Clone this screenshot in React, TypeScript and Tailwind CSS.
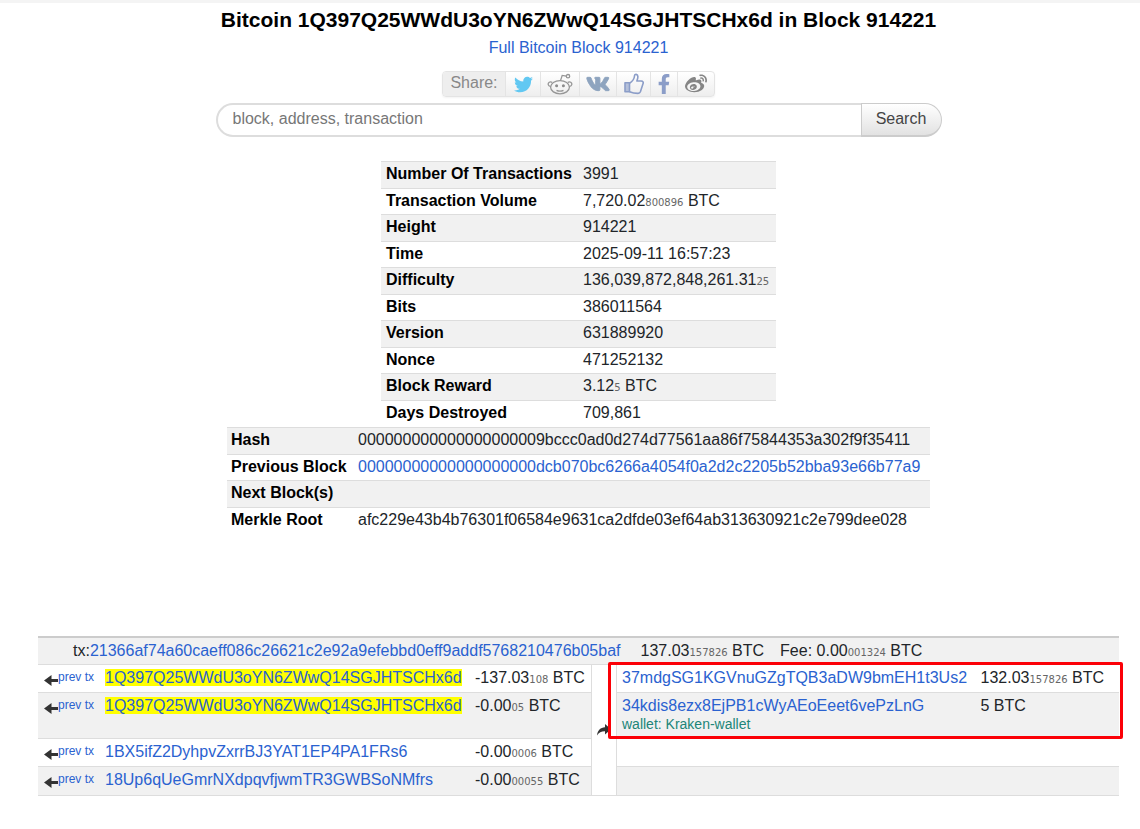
import React from "react";
import { FaTwitter, FaVk, FaFacebookF, FaWeibo } from "react-icons/fa";

const linkClass = "text-[#2a62d0] hover:underline";

function Amount({ main, rest = "", unit = "" }: { main: string; rest?: string; unit?: string }) {
  return (
    <span className="whitespace-nowrap">
      {main}
      <small className="font-['DejaVu_Sans',sans-serif] text-[10px] leading-none text-[#666]">{rest}</small>
      {unit && ` ${unit}`}
    </span>
  );
}

function RedditIcon() {
  return (
    <svg viewBox="0 0 26 22" className="h-[22px] w-[26px]" fill="none" stroke="#969696" strokeWidth="1.3" aria-hidden="true">
      <ellipse cx="13" cy="14.2" rx="9.4" ry="6.600" />
      <path d="M5.2 9.4C3 8 .8 9.800 1.2 11.600c.2 1 1.200 1.700 2.600 1.900M20.800 9.400c2.200-1.400 4.400.4 4 2.200-.2 1-1.200 1.700-2.600 1.900" />
      <path d="M13.500 7.600 15.200 2.400 19.400 3.200" />
      <circle cx="21" cy="3.200" r="1.700" />
      <circle cx="9.600" cy="12.800" r="1.500" fill="#8c8c8c" stroke="none" />
      <circle cx="16.400" cy="12.800" r="1.500" fill="#8c8c8c" stroke="none" />
      <path d="M9.500 17.400c2 .9 5 .9 7 0" />
    </svg>
  );
}

function LikeIcon() {
  return (
    <svg viewBox="0 0 20 22" className="h-[22px] w-5" fill="none" stroke="#8b9dc8" strokeWidth="1.6" strokeLinejoin="round" aria-hidden="true">
      <path d="M5.500 10.200c3-1.700 4.700-4 5-7.200.1-2.400 3.300-2.200 3.400.6 0 1.800-.5 3-1 4.400h4.300c1.800 0 2.400 1.300 1.800 2.700l-2.600 8.100c-.4 1.100-1.200 1.600-2.400 1.600-3.400 0-5-.2-8.500-1.700" />
      <path d="M1 9.800h4.500v9H1z" fill="#8b9dc8" fillOpacity=".6" />
    </svg>
  );
}

function LeftArrow() {
  return (
    <svg viewBox="0 0 14 11" className="mt-1.5 h-[11px] w-[14px] shrink-0" fill="#333" aria-hidden="true">
      <path d="M0 5.500 7.500 0v3.900H14v3.200H7.500V11z" />
    </svg>
  );
}

function ForwardArrow() {
  return (
    <svg viewBox="0 0 14 12" className="h-3 w-[14px]" fill="#333" aria-hidden="true">
      <path d="M0 11.500C.6 6.200 3.500 3.400 8 3.200V0l6 5.300-6 5.300V7.300C4.500 7.200 2 8.500 0 11.500z" />
    </svg>
  );
}

const shares = [
  { name: "Twitter", width: "w-[35px]", icon: <FaTwitter size={19} color="#62c8f2" /> },
  { name: "Reddit", width: "w-[39px]", icon: <RedditIcon /> },
  { name: "VK", width: "w-[37px]", icon: <FaVk size={24} color="#8ea4bf" stroke="#8ea4bf" strokeWidth={24} /> },
  { name: "Like", width: "w-[34px]", icon: <LikeIcon /> },
  { name: "Facebook", width: "w-[27px]", icon: <FaFacebookF size={20} color="#8b9dc8" /> },
  { name: "Weibo", width: "w-[37px]", icon: <FaWeibo size={22} color="#858585" /> },
];

const summary: [string, string, string?, string?][] = [
  ["Number Of Transactions", "3991"],
  ["Transaction Volume", "7,720.02", "800896", "BTC"],
  ["Height", "914221"],
  ["Time", "2025-09-11 16:57:23"],
  ["Difficulty", "136,039,872,848,261.31", "25"],
  ["Bits", "386011564"],
  ["Version", "631889920"],
  ["Nonce", "471252132"],
  ["Block Reward", "3.12", "5", "BTC"],
  ["Days Destroyed", "709,861"],
];

const hashes = [
  { label: "Hash", value: "000000000000000000009bccc0ad0d274d77561aa86f75844353a302f9f35411" },
  { label: "Previous Block", value: "00000000000000000000dcb070bc6266a4054f0a2d2c2205b52bba93e66b77a9", link: true },
  { label: "Next Block(s)", value: "" },
  { label: "Merkle Root", value: "afc229e43b4b76301f06584e9631ca2dfde03ef64ab313630921c2e799dee028" },
];

const inputs = [
  { address: "1Q397Q25WWdU3oYN6ZWwQ14SGJHTSCHx6d", main: "-137.03", rest: "108", marked: true, height: "h-7" },
  { address: "1Q397Q25WWdU3oYN6ZWwQ14SGJHTSCHx6d", main: "-0.00", rest: "05", marked: true, height: "h-[46px]" },
  { address: "1BX5ifZ2DyhpvZxrrBJ3YAT1EP4PA1FRs6", main: "-0.00", rest: "0006", marked: false, height: "h-7" },
  { address: "18Up6qUeGmrNXdpqvfjwmTR3GWBSoNMfrs", main: "-0.00", rest: "00055", marked: false, height: "h-7" },
];

const stripedRow = "h-[26px] border-t border-[#ddd] align-top leading-6 odd:h-[27px] odd:bg-[#f1f1f1]";
const txRow = "border-t border-[#ddd] align-top leading-[25px] even:bg-[#f1f1f1]";

export default function App() {
  return (
    <div className="border-t-[3px] border-[#f4f4f4] bg-white pb-9 font-['Liberation_Sans',Arial,sans-serif] text-base leading-6 text-[#212529]">
      <header className="flex flex-col items-center pl-[17px]">
        <h1 className="pt-1 text-[21px] leading-[26px] font-bold text-black">
          Bitcoin 1Q397Q25WWdU3oYN6ZWwQ14SGJHTSCHx6d in Block 914221
        </h1>
        <a href="#block" className={`${linkClass} mt-[3px]`}>Full Bitcoin Block 914221</a>
        <div className="mt-[11px] flex h-[26px] overflow-hidden rounded border border-[#e4e4e4] bg-linear-to-b from-white to-[#eee] shadow-xs">
          <span className="flex w-[62px] items-center justify-center bg-[#eee] pb-0.5 text-[#888]">Share:</span>
          {shares.map((s) => (
            <a key={s.name} href={`#${s.name}`} aria-label={s.name} className={`${s.width} flex items-center justify-center border-l border-[#e4e4e4]`}>
              {s.icon}
            </a>
          ))}
        </div>
        <form className="mt-1.5 flex h-[34px] w-full max-w-[726px]" onSubmit={(e) => e.preventDefault()}>
          <input
            type="text"
            aria-label="block, address, transaction"
            placeholder="block, address, transaction"
            className="min-w-0 flex-1 rounded-l-full border-2 border-r-0 border-[#ddd] px-[15px] pb-0.5 placeholder:text-[#777]"
          />
          <button type="submit" className="w-[81px] rounded-r-full border border-b-2 border-[#ccc] bg-linear-to-b from-white to-[#e2e2e2] pb-0.5 text-[#444]">
            Search
          </button>
        </form>
      </header>

      <main>
        <div className="mt-6 flex flex-col items-center pl-[17px]">
          <table className="w-[395px] border-collapse">
            <tbody>
              {summary.map(([label, main, rest, unit]) => (
                <tr key={label} className={stripedRow}>
                  <th scope="row" className="w-[198px] pl-[5px] text-left whitespace-nowrap text-black">{label}</th>
                  <td className="pl-1"><Amount main={main} rest={rest} unit={unit} /></td>
                </tr>
              ))}
            </tbody>
          </table>
          <table className="w-[703px] border-collapse">
            <tbody>
              {hashes.map((h) => (
                <tr key={h.label} className={stripedRow}>
                  <th scope="row" className="w-[126px] pl-1 text-left whitespace-nowrap text-black">{h.label}</th>
                  <td className="pl-[5px]">
                    {h.link ? <a href="#previous" className={linkClass}>{h.value}</a> : h.value}
                  </td>
                </tr>
              ))}
            </tbody>
          </table>
        </div>

        <section className="mt-[103px] pr-[21px] pl-[38px]">
          <div className="flex h-7 items-center border-t-2 border-[#ccc] bg-[#f1f1f1] pl-[35px] whitespace-nowrap">
            tx:
            <a href="#tx" className={linkClass}>21366af74a60caeff086c26621c2e92a9efebbd0eff9addf5768210476b05baf</a>
            <span className="ml-5"><Amount main="137.03" rest="157826" unit="BTC" /></span>
            <span className="ml-4"><Amount main="Fee: 0.00" rest="001324" unit="BTC" /></span>
          </div>
          <div className="flex border-b border-[#ddd]">
            <table className="w-[554px] shrink-0 border-collapse border-r border-[#ddd]">
              <tbody>
                {inputs.map((i, n) => (
                  <tr key={n} className={`${txRow} ${i.height}`}>
                    <td className="w-[67px] pl-1.5">
                      <a href="#prev" className={`${linkClass} flex items-center text-xs leading-6 whitespace-nowrap`}>
                        <LeftArrow />prev tx
                      </a>
                    </td>
                    <td className="w-[370px]">
                      <a href="#address" className={linkClass}>
                        {i.marked ? <mark className="bg-[yellow] text-inherit">{i.address}</mark> : i.address}
                      </a>
                    </td>
                    <td><Amount main={i.main} rest={i.rest} unit="BTC" /></td>
                  </tr>
                ))}
              </tbody>
            </table>
            <div className="flex w-6 shrink-0 items-center justify-center border-t border-[#ddd]">
              <ForwardArrow />
            </div>
            <div className="relative flex-1">
              <table className="w-full border-collapse border-l border-[#ddd]">
                <tbody>
                  <tr className={`${txRow} h-7`}>
                    <td className="w-[364px] pl-[5px]"><a href="#address" className={linkClass}>37mdgSG1KGVnuGZgTQB3aDW9bmEH1t3Us2</a></td>
                    <td><Amount main="132.03" rest="157826" unit="BTC" /></td>
                  </tr>
                  <tr className={`${txRow} h-[46px]`}>
                    <td className="pl-[5px]">
                      <a href="#address" className={linkClass}>34kdis8ezx8EjPB1cWyAEoEeet6vePzLnG</a>
                      <a href="#wallet" className="block text-sm leading-3 text-[#208578]">wallet: Kraken-wallet</a>
                    </td>
                    <td>5 BTC</td>
                  </tr>
                  <tr className={`${txRow} h-7`}><td colSpan={2} /></tr>
                  <tr className={`${txRow} h-7`}><td colSpan={2} /></tr>
                </tbody>
              </table>
              <div className="pointer-events-none absolute -top-0.5 -right-1 -left-2 h-[77px] rounded-xs border-[3px] border-[#fb0007]" />
            </div>
          </div>
        </section>
      </main>
    </div>
  );
}
